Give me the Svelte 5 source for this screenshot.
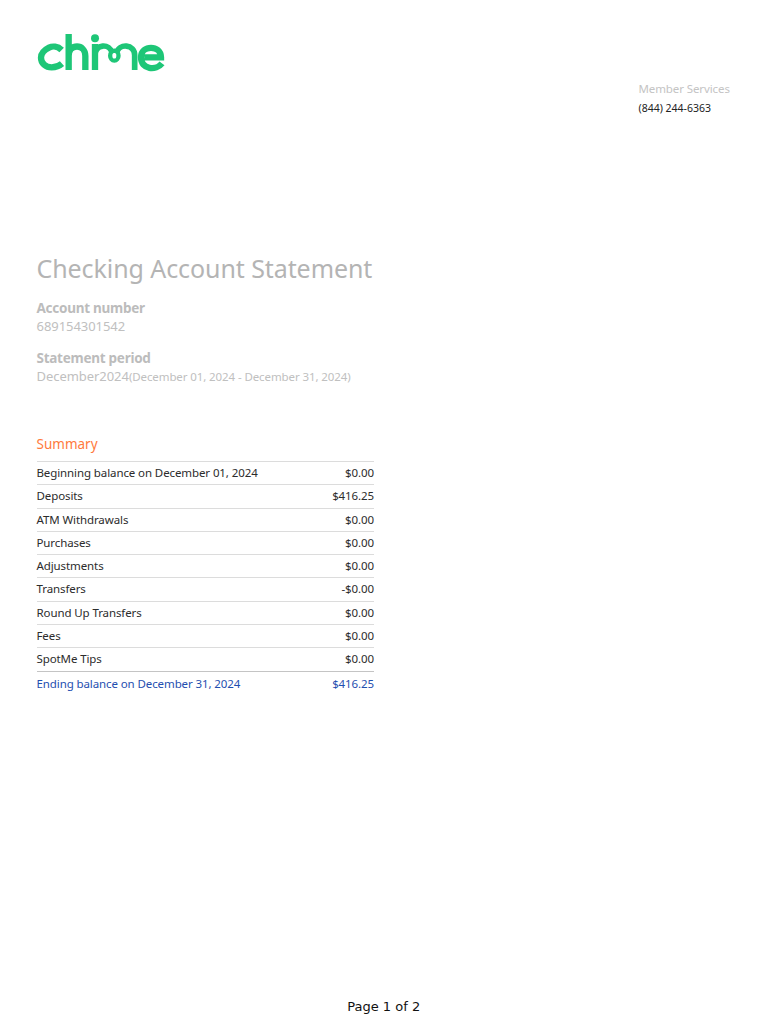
<script lang="ts">
  const rows = [
    { label: "Beginning balance on December 01, 2024", amount: "$0.00" },
    { label: "Deposits", amount: "$416.25" },
    { label: "ATM Withdrawals", amount: "$0.00" },
    { label: "Purchases", amount: "$0.00" },
    { label: "Adjustments", amount: "$0.00" },
    { label: "Transfers", amount: "-$0.00" },
    { label: "Round Up Transfers", amount: "$0.00" },
    { label: "Fees", amount: "$0.00" },
    { label: "SpotMe Tips", amount: "$0.00" },
  ]
</script>

<div class="page">
  <header class="top">
    <svg class="logo" viewBox="50 42 390 120" width="130" height="40" aria-label="chime">
      <g fill="none" stroke="#1ec677" stroke-width="19">
        <path d="M124 90C112 78 96 78 86 83C68 92 62 105 62 113C62 130 76 142 94 142C106 142 116 139 125 131" />
        <path d="M145 42V150M145 108C145 70 195 70 195 108V150" />
        <path d="M224 72V150" />
        <path stroke-width="17" d="M224 106C224 72 268 68 276 100M343 150V106C343 72 296 68 288 100" />
        <ellipse stroke-width="13" cx="282" cy="107" rx="12.500" ry="15" />
        <path d="M372 112H422C422 74 362 74 362 112C362 150 408 152 425 130" />
      </g>
      <circle cx="224" cy="55" r="12" fill="#1ec677" />
    </svg>
    <div class="contact">
      <div class="contact-label">Member Services</div>
      <div class="contact-phone">(844) 244-6363</div>
    </div>
  </header>

  <main class="content">
    <h1>Checking Account Statement</h1>
    <div class="field-label">Account number</div>
    <div class="field-value">689154301542</div>
    <div class="field-label second">Statement period</div>
    <div class="field-value">December2024<span class="range">(December 01, 2024 - December 31, 2024)</span></div>

    <h2>Summary</h2>
    <div class="table">
      {#each rows as row}
        <div class="row"><span>{row.label}</span><span>{row.amount}</span></div>
      {/each}
      <div class="row total"><span>Ending balance on December 31, 2024</span><span>$416.25</span></div>
    </div>
  </main>

  <footer>Page 1 of 2</footer>
</div>

<style>
  :global(body) {
    margin: 0;
    background: #fff;
  }

  .page {
    height: 1024px;
    box-sizing: border-box;
    padding: 34px 38px 0 36.500px;
    display: flex;
    flex-direction: column;
    font-family: "Noto Sans", sans-serif;
    overflow: hidden;
  }

  .top {
    display: flex;
    justify-content: space-between;
    align-items: flex-start;
    height: 220px;
    flex: none;
  }

  .logo {
    display: block;
  }

  .contact {
    padding-top: 47px;
    width: 91.500px;
  }

  .contact-label {
    color: #c4c4c4;
    font-size: 11.500px;
    line-height: 16px;
    letter-spacing: -0.1px;
    white-space: nowrap;
  }

  .contact-phone {
    color: #222;
    font-size: 10.500px;
    line-height: 16px;
    margin-top: 3px;
    white-space: nowrap;
  }

  .content {
    width: 337.500px;
  }

  h1 {
    margin: -1px 0 0;
    color: #b4b4b4;
    font-size: 25px;
    font-weight: 400;
    line-height: 30px;
    letter-spacing: -0.08px;
    white-space: nowrap;
  }

  .field-label {
    margin-top: 16px;
    color: #bcbcbc;
    font-size: 13.500px;
    font-weight: 700;
    line-height: 18px;
    letter-spacing: -0.26px;
  }

  .field-label.second {
    margin-top: 14px;
  }

  .field-value {
    margin-top: 0;
    color: #c0c0c0;
    font-size: 13px;
    line-height: 18px;
    letter-spacing: -0.05px;
    white-space: nowrap;
  }

  .range {
    font-size: 11.500px;
    letter-spacing: -0.1px;
  }

  h2 {
    margin: 48px 0 7px;
    color: #ff7a3d;
    font-size: 13.500px;
    font-weight: 400;
    line-height: 20px;
  }

  .table {
    border-top: 1px solid #dcdcdc;
  }

  .row {
    display: flex;
    justify-content: space-between;
    height: 22.300px;
    line-height: 22px;
    border-bottom: 1px solid #dcdcdc;
    color: #2c2c2c;
    font-size: 11.500px;
    letter-spacing: -0.1px;
    white-space: nowrap;
  }

  .row.total {
    border-bottom: 0;
    border-top: 1px solid #c4c4c4;
    margin-top: -1px;
    padding-top: 1px;
    color: #1f4fb0;
  }

  footer {
    margin-top: auto;
    padding-bottom: 8px;
    text-align: center;
    color: #111;
    font-family: "DejaVu Sans", sans-serif;
    font-size: 13px;
    line-height: 18px;
    margin-right: -1px;
  }
</style>
